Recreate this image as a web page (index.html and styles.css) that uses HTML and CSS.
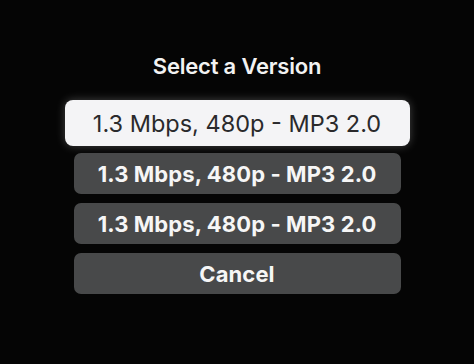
FILE: index.html
```html
<!DOCTYPE html>
<html>
<head>
<meta charset="utf-8">
<link rel="stylesheet" href="styles.css">
</head>
<body>
<div class="screen">
  <div class="title">Select a Version</div>
  <div class="list">
    <div class="btn focused">1.3 Mbps, 480p - MP3 2.0</div>
    <div class="btn">1.3 Mbps, 480p - MP3 2.0</div>
    <div class="btn">1.3 Mbps, 480p - MP3 2.0</div>
    <div class="btn">Cancel</div>
  </div>
</div>
</body>
</html>
```
FILE: styles.css
```css
html, body {
  margin: 0;
  padding: 0;
  background: #050505;
  width: 474px;
  height: 364px;
  overflow: hidden;
}
.screen {
  display: flex;
  flex-direction: column;
  align-items: center;
  padding-top: 52px;
  font-family: Inter, "Noto Sans", sans-serif;
}
.title {
  color: #f2f2f2;
  font-size: 22px;
  font-weight: 600;
  line-height: 28px;
  letter-spacing: -0.2px;
}
.list {
  display: flex;
  flex-direction: column;
  align-items: center;
  margin-top: 20px;
  gap: 9px;
}
.btn {
  width: 327px;
  height: 41px;
  border-radius: 7px;
  background: #48494a;
  color: #f6f6f6;
  font-size: 22px;
  font-weight: 650;
  letter-spacing: 0.1px;
  display: flex;
  align-items: center;
  justify-content: center;
}
.btn.focused {
  width: 345px;
  height: 46px;
  margin-bottom: -2px;
  background: #f4f4f6;
  color: #2a2a2c;
  font-weight: 400;
  font-size: 23.5px;
  letter-spacing: 0;
  border-radius: 8px;
  box-shadow: 0 0 10px rgba(255,255,255,0.25);
}
```
